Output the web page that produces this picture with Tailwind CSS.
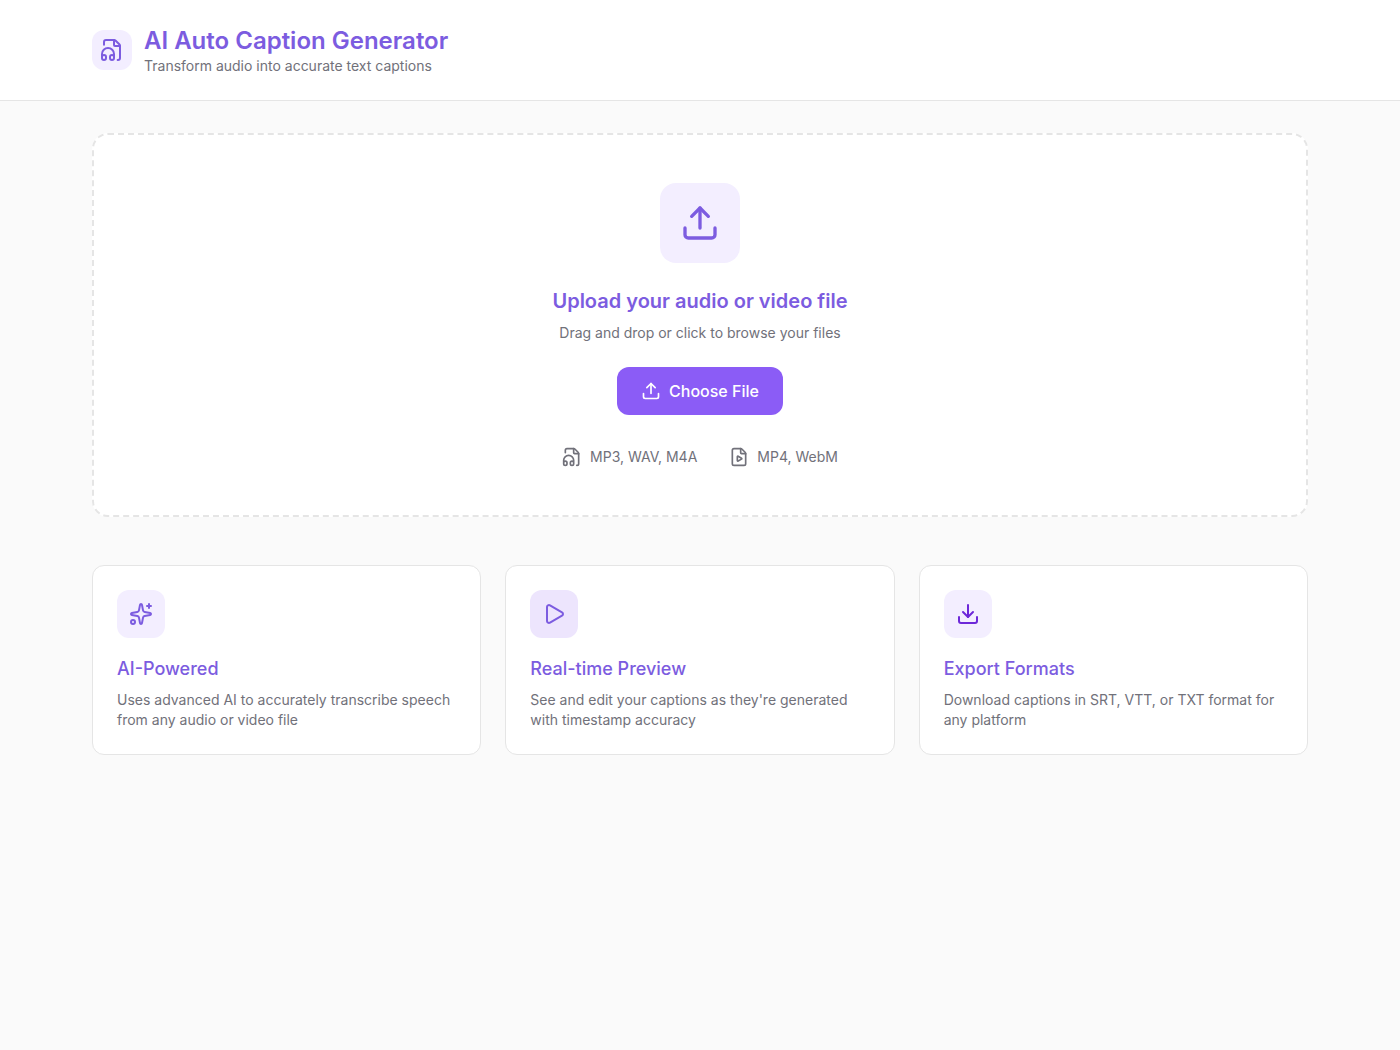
<!DOCTYPE html>
<html lang="en">
<head>
  <meta charset="UTF-8">
  <meta name="viewport" content="width=device-width, initial-scale=1.0">
  <title>AI Auto Caption Generator</title>
  <script src="https://cdn.jsdelivr.net/npm/@tailwindcss/browser@4"></script>
</head>
<body class="bg-[#fafafa] min-h-screen font-['Inter',sans-serif] text-[#18181b] antialiased">
  <!-- Header -->
  <header class="bg-white border-b border-[#e5e5e5]">
    <div class="max-w-7xl mx-auto px-8 py-6 flex items-center gap-3">
      <div class="w-10 h-10 rounded-xl bg-[#f3eeff] flex items-center justify-center text-[#7c5ce0]">
        <svg class="w-6 h-6" viewBox="0 0 24 24" fill="none" stroke="currentColor" stroke-width="2" stroke-linecap="round" stroke-linejoin="round"><path d="M4 6.835V4a2 2 0 0 1 2-2h8a2.4 2.4 0 0 1 1.706.706l3.588 3.588A2.4 2.4 0 0 1 20 8v12a2 2 0 0 1-2 2h-.343"/><path d="M14 2v5a1 1 0 0 0 1 1h5"/><path d="M2 19a2 2 0 0 1 4 0v1a2 2 0 0 1-4 0v-4a6 6 0 0 1 12 0v4a2 2 0 0 1-4 0v-1a2 2 0 0 1 4 0"/></svg>
      </div>
      <div>
        <h1 class="text-2xl leading-[34px] -mb-[2px] font-semibold text-[#7c5ce0]">AI Auto Caption Generator</h1>
        <p class="text-sm text-[#71717a]">Transform audio into accurate text captions</p>
      </div>
    </div>
  </header>

  <main class="max-w-7xl mx-auto px-8 py-8">
    <!-- Upload area -->
    <section class="bg-white border-2 border-dashed border-[#e5e5e5] rounded-2xl p-12 flex flex-col items-center text-center">
      <div class="w-20 h-20 rounded-2xl bg-[#f3eeff] flex items-center justify-center text-[#7c5ce0] mb-6">
        <svg class="w-10 h-10" viewBox="0 0 24 24" fill="none" stroke="currentColor" stroke-width="2" stroke-linecap="round" stroke-linejoin="round"><path d="M12 3v12"/><path d="m17 8-5-5-5 5"/><path d="M21 15v4a2 2 0 0 1-2 2H5a2 2 0 0 1-2-2v-4"/></svg>
      </div>
      <h2 class="text-xl font-semibold text-[#7c5ce0] mb-2">Upload your audio or video file</h2>
      <p class="text-sm text-[#71717a] mb-6">Drag and drop or click to browse your files</p>
      <button class="h-12 px-6 rounded-xl bg-[#8b5cf6] text-white font-medium flex items-center gap-2">
        <svg class="w-5 h-5" viewBox="0 0 24 24" fill="none" stroke="currentColor" stroke-width="2" stroke-linecap="round" stroke-linejoin="round"><path d="M12 3v12"/><path d="m17 8-5-5-5 5"/><path d="M21 15v4a2 2 0 0 1-2 2H5a2 2 0 0 1-2-2v-4"/></svg>
        Choose File
      </button>
      <div class="mt-8 flex items-center gap-8 text-sm text-[#71717a]">
        <div class="flex items-center gap-2">
          <svg class="w-5 h-5" viewBox="0 0 24 24" fill="none" stroke="currentColor" stroke-width="2" stroke-linecap="round" stroke-linejoin="round"><path d="M4 6.835V4a2 2 0 0 1 2-2h8a2.4 2.4 0 0 1 1.706.706l3.588 3.588A2.4 2.4 0 0 1 20 8v12a2 2 0 0 1-2 2h-.343"/><path d="M14 2v5a1 1 0 0 0 1 1h5"/><path d="M2 19a2 2 0 0 1 4 0v1a2 2 0 0 1-4 0v-4a6 6 0 0 1 12 0v4a2 2 0 0 1-4 0v-1a2 2 0 0 1 4 0"/></svg>
          <span>MP3, WAV, M4A</span>
        </div>
        <div class="flex items-center gap-2">
          <svg class="w-5 h-5" viewBox="0 0 24 24" fill="none" stroke="currentColor" stroke-width="2" stroke-linecap="round" stroke-linejoin="round"><path d="M6 22a2 2 0 0 1-2-2V4a2 2 0 0 1 2-2h8a2.4 2.4 0 0 1 1.706.706l3.588 3.588A2.4 2.4 0 0 1 20 8v12a2 2 0 0 1-2 2z"/><path d="M14 2v5a1 1 0 0 0 1 1h5"/><path d="M15.033 13.44a.647.647 0 0 1 0 1.12l-4.065 2.352a.645.645 0 0 1-.968-.56v-4.704a.645.645 0 0 1 .967-.56z"/></svg>
          <span>MP4, WebM</span>
        </div>
      </div>
    </section>

    <!-- Features -->
    <section class="mt-12 grid grid-cols-3 gap-6">
      <div class="bg-white border border-[#e5e5e5] rounded-xl p-6">
        <div class="w-12 h-12 rounded-xl bg-[#f3eeff] flex items-center justify-center text-[#7c5ce0] mb-4">
          <svg class="w-6 h-6" viewBox="0 0 24 24" fill="none" stroke="currentColor" stroke-width="2" stroke-linecap="round" stroke-linejoin="round"><path d="M11.017 2.814a1 1 0 0 1 1.966 0l1.051 5.558a2 2 0 0 0 1.594 1.594l5.558 1.051a1 1 0 0 1 0 1.966l-5.558 1.051a2 2 0 0 0-1.594 1.594l-1.051 5.558a1 1 0 0 1-1.966 0l-1.051-5.558a2 2 0 0 0-1.594-1.594l-5.558-1.051a1 1 0 0 1 0-1.966l5.558-1.051a2 2 0 0 0 1.594-1.594z"/><path d="M20 2v4"/><path d="M22 4h-4"/><circle cx="4" cy="20" r="2"/></svg>
        </div>
        <h3 class="text-lg leading-[30px] font-medium text-[#7c5ce0] mb-[6px]">AI-Powered</h3>
        <p class="text-sm text-[#71717a]">Uses advanced AI to accurately transcribe speech from any audio or video file</p>
      </div>
      <div class="bg-white border border-[#e5e5e5] rounded-xl p-6">
        <div class="w-12 h-12 rounded-xl bg-[#ede5fd] flex items-center justify-center text-[#7c5ce0] mb-4">
          <svg class="w-6 h-6" viewBox="0 0 24 24" fill="none" stroke="currentColor" stroke-width="2" stroke-linecap="round" stroke-linejoin="round"><path d="M5 5a2 2 0 0 1 3.008-1.728l11.997 6.998a2 2 0 0 1 .003 3.458l-12 7A2 2 0 0 1 5 19z"/></svg>
        </div>
        <h3 class="text-lg leading-[30px] font-medium text-[#7c5ce0] mb-[6px]">Real-time Preview</h3>
        <p class="text-sm text-[#71717a]">See and edit your captions as they're generated with timestamp accuracy</p>
      </div>
      <div class="bg-white border border-[#e5e5e5] rounded-xl p-6">
        <div class="w-12 h-12 rounded-xl bg-[#f3eeff] flex items-center justify-center text-[#6d28d9] mb-4">
          <svg class="w-6 h-6" viewBox="0 0 24 24" fill="none" stroke="currentColor" stroke-width="2" stroke-linecap="round" stroke-linejoin="round"><path d="M12 15V3"/><path d="M21 15v4a2 2 0 0 1-2 2H5a2 2 0 0 1-2-2v-4"/><path d="m7 10 5 5 5-5"/></svg>
        </div>
        <h3 class="text-lg leading-[30px] font-medium text-[#7c5ce0] mb-[6px]">Export Formats</h3>
        <p class="text-sm text-[#71717a]">Download captions in SRT, VTT, or TXT format for any platform</p>
      </div>
    </section>
  </main>
</body>
</html>
